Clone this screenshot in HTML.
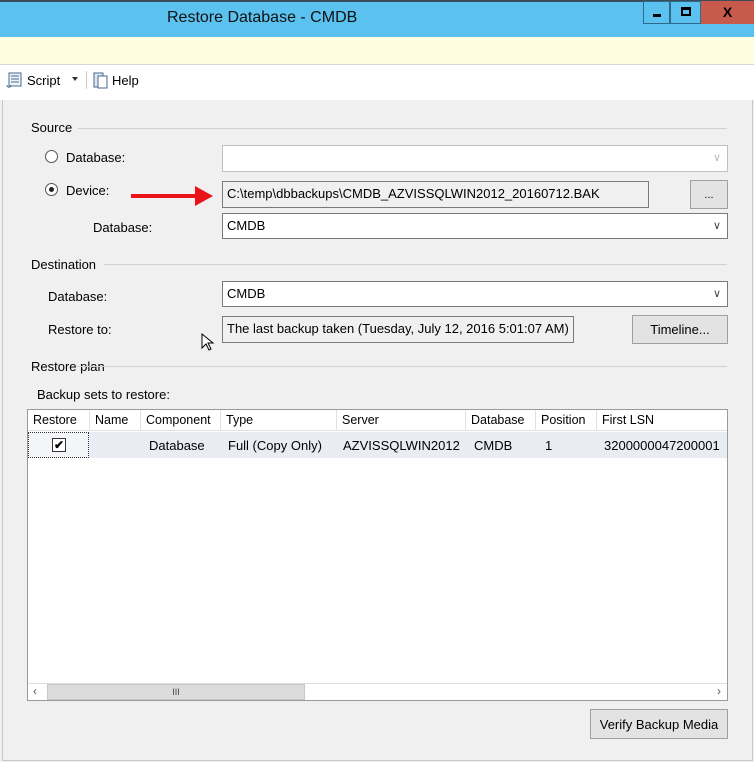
<!DOCTYPE html>
<html><head><style>
*{box-sizing:border-box;margin:0;padding:0}
body{width:754px;height:762px;background:#f0f0f0;font-family:"Liberation Sans",sans-serif;font-size:13px;color:#000;position:relative;overflow:hidden}
.a{position:absolute;white-space:nowrap}
.box{position:absolute;border:1px solid #8a8a8a;background:#fff;padding:4px 0 0 4px}
.btn{position:absolute;border:1px solid #a0a0a0;background:#e3e3e3;text-align:center}
.ln{position:absolute;height:1px;background:#d0d0d0}
.col{position:absolute;top:0;height:21px;border-right:1px solid #e0e0e0;padding:3px 0 0 5px}
.rc{position:absolute;top:0;padding:6px 0 0 6px}
</style></head><body>
<div class="a" style="left:0;top:0;width:754px;height:37px;background:#5bc1ee;border-top:2px solid #3d4b57"></div>
<div class="a" style="left:167px;top:9px;font-size:16px;color:#111">Restore Database - CMDB</div>
<div class="a" style="left:643px;top:1px;width:27px;height:23px;border:1px solid #2d6a8c;background:#5bc1ee"><div style="position:absolute;left:9px;top:12px;width:8px;height:3px;background:#000"></div></div>
<div class="a" style="left:670px;top:1px;width:31px;height:23px;border:1px solid #2d6a8c;background:#5bc1ee"><div style="position:absolute;left:10px;top:5px;width:10px;height:9px;border:2px solid #000;border-top-width:3px"></div></div>
<div class="a" style="left:701px;top:1px;width:53px;height:23px;background:#c75a4b;color:#000;font-weight:bold;font-size:14px;text-align:center;padding-top:3px">X</div>
<div class="a" style="left:0;top:37px;width:754px;height:28px;background:#fffde1;border-bottom:1px solid #d6d6d6"></div>
<div class="a" style="left:0;top:65px;width:754px;height:35px;background:#fff"></div>
<svg class="a" style="left:5px;top:71px" width="20" height="19"><path d="M4 2h12v13H4z" fill="#eef3f9" stroke="#4a6a90"/><path d="M6 5h8M6 8h8M6 11h8" stroke="#4a6a90"/><path d="M2 14c0 3 4 3 4 0" fill="none" stroke="#4a6a90"/></svg>
<div class="a" style="left:27px;top:73px">Script</div>
<div class="a" style="left:72px;top:77px;width:0;height:0;border-left:3px solid transparent;border-right:3px solid transparent;border-top:4px solid #333"></div>
<div class="a" style="left:86px;top:71px;width:1px;height:18px;background:#ccc"></div>
<svg class="a" style="left:92px;top:71px" width="18" height="19"><rect x="2" y="2" width="9" height="14" fill="#dce6f2" stroke="#4a6a90"/><rect x="6" y="5" width="9" height="12" fill="#fff" stroke="#4a6a90"/></svg>
<div class="a" style="left:112px;top:73px">Help</div>
<div class="a" style="left:2px;top:100px;width:751px;height:661px;border:1px solid #c8c8c8;border-top:none"></div>

<div class="a" style="left:31px;top:120px">Source</div>
<div class="ln" style="left:78px;top:128px;width:649px"></div>
<div class="a" style="left:45px;top:150px;width:13px;height:13px;border:1px solid #555;border-radius:50%;background:#fff"></div>
<div class="a" style="left:66px;top:150px">Database:</div>
<div class="box" style="left:222px;top:145px;width:506px;height:27px;border-color:#c0c0c0"></div>
<div class="a" style="left:713px;top:151px;color:#bbb;font-size:11px">&#8744;</div>
<div class="a" style="left:45px;top:183px;width:13px;height:13px;border:1px solid #555;border-radius:50%;background:#fff"><div style="position:absolute;left:3px;top:3px;width:5px;height:5px;border-radius:50%;background:#222"></div></div>
<div class="a" style="left:66px;top:183px">Device:</div>
<div class="a" style="left:131px;top:194px;width:66px;height:4px;background:#e8141a"></div>
<div class="a" style="left:195px;top:186px;width:0;height:0;border-top:10px solid transparent;border-bottom:10px solid transparent;border-left:18px solid #e8141a"></div>
<div class="box" style="left:222px;top:181px;width:427px;height:27px;background:#f0f0f0;border-color:#7a7a7a">C:\temp\dbbackups\CMDB_AZVISSQLWIN2012_20160712.BAK</div>
<div class="btn" style="left:690px;top:180px;width:38px;height:29px;padding-top:8px;font-size:11px">...</div>
<div class="a" style="left:93px;top:220px">Database:</div>
<div class="box" style="left:222px;top:213px;width:506px;height:26px;border-color:#7a7a7a">CMDB</div>
<div class="a" style="left:713px;top:219px;color:#444;font-size:11px">&#8744;</div>

<div class="a" style="left:31px;top:257px">Destination</div>
<div class="ln" style="left:104px;top:264px;width:623px"></div>
<div class="a" style="left:48px;top:289px">Database:</div>
<div class="box" style="left:222px;top:281px;width:506px;height:26px;border-color:#7a7a7a">CMDB</div>
<div class="a" style="left:713px;top:287px;color:#444;font-size:11px">&#8744;</div>
<div class="a" style="left:48px;top:322px">Restore to:</div>
<div class="box" style="left:222px;top:316px;width:352px;height:27px;background:#f0f0f0;border-color:#7a7a7a">The last backup taken (Tuesday, July 12, 2016 5:01:07 AM)</div>
<div class="btn" style="left:632px;top:315px;width:96px;height:29px;padding-top:6px">Timeline...</div>
<svg class="a" style="left:201px;top:333px" width="14" height="20"><path d="M1 1v14l4-4 3 6 2-1-3-6h5z" fill="#fff" stroke="#000"/></svg>

<div class="a" style="left:31px;top:359px">Restore plan</div>
<div class="ln" style="left:77px;top:366px;width:650px"></div>
<div class="a" style="left:37px;top:387px">Backup sets to restore:</div>

<div class="a" style="left:27px;top:409px;width:701px;height:292px;border:1px solid #9a9a9a;background:#fff">
 <div style="position:absolute;left:0;top:0;width:699px;height:21px;border-bottom:1px solid #e0e0e0;font-size:12.5px">
  <div class="col" style="left:0;width:62px">Restore</div>
  <div class="col" style="left:62px;width:51px">Name</div>
  <div class="col" style="left:113px;width:80px">Component</div>
  <div class="col" style="left:193px;width:116px">Type</div>
  <div class="col" style="left:309px;width:129px">Server</div>
  <div class="col" style="left:438px;width:70px">Database</div>
  <div class="col" style="left:508px;width:61px">Position</div>
  <div class="col" style="left:569px;width:130px;border:none">First LSN</div>
 </div>
 <div style="position:absolute;left:0;top:22px;width:699px;height:26px;background:#e9edf3">
  <div style="position:absolute;left:0;top:0;width:61px;height:26px;border:1px dotted #333;background:#f3f5f8"></div>
  <div style="position:absolute;left:24px;top:6px;width:14px;height:14px;border:1px solid #333;background:#fff;font-size:12px;line-height:12px;text-align:center;font-weight:bold">&#10004;</div>
  <div class="rc" style="left:115px">Database</div>
  <div class="rc" style="left:194px">Full (Copy Only)</div>
  <div class="rc" style="left:309px">AZVISSQLWIN2012</div>
  <div class="rc" style="left:440px">CMDB</div>
  <div class="rc" style="left:511px">1</div>
  <div class="rc" style="left:570px">3200000047200001</div>
 </div>
 <div style="position:absolute;left:0;top:273px;width:699px;height:17px;border-top:1px solid #ddd;background:#fff">
  <div style="position:absolute;left:5px;top:0;font-size:12px;color:#555">&#8249;</div>
  <div style="position:absolute;left:19px;top:0;width:258px;height:16px;background:#dcdcdc;border:1px solid #c8c8c8;text-align:center;font-size:9px;padding-top:2px;color:#444">III</div>
  <div style="position:absolute;right:6px;top:0;font-size:12px;color:#555">&#8250;</div>
 </div>
</div>
<div class="btn" style="left:590px;top:709px;width:138px;height:30px;padding-top:7px">Verify Backup Media</div>
</body></html>
